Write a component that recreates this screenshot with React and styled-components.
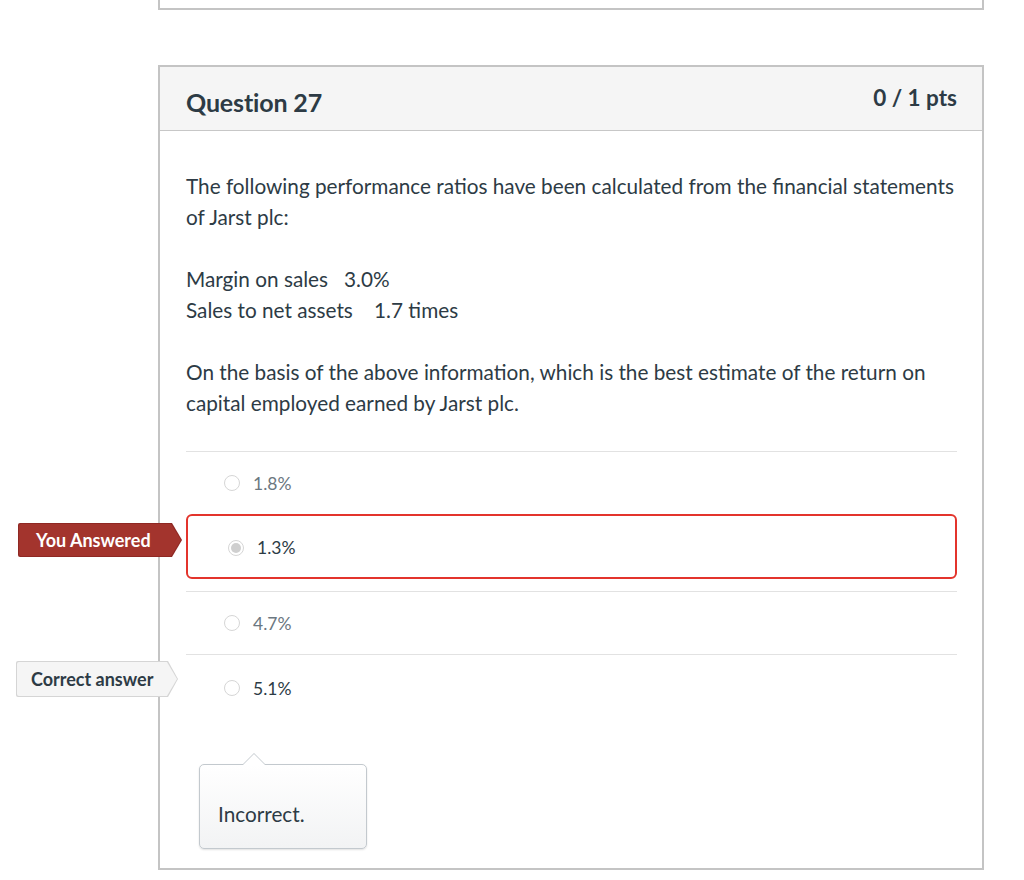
import React from "react";
import styled, { createGlobalStyle } from "styled-components";

const Global = createGlobalStyle`
  body {
    margin: 0;
    background: #fff;
    font-family: Lato, "Helvetica Neue", Arial, sans-serif;
    color: #2d3b45;
  }
`;

const Page = styled.div`
  width: 1024px;
  height: 880px;
  overflow: hidden;
  padding-left: 158px;
  box-sizing: border-box;
`;

const PrevCard = styled.div`
  width: 826px;
  height: 10px;
  box-sizing: border-box;
  border: 2px solid #c4c4c4;
  border-top: none;
`;

const Card = styled.div`
  width: 826px;
  margin-top: 55px;
  box-sizing: border-box;
  border: 2px solid #c4c4c4;
`;

const Header = styled.div`
  display: flex;
  justify-content: space-between;
  align-items: flex-start;
  height: 63px;
  padding: 0 25px 0 26px;
  background: #f5f5f5;
  border-bottom: 1px solid #c7c7c7;
`;

const Title = styled.h2`
  margin: 20px 0 0;
  font-size: 25px;
  font-weight: 700;
  color: #2d3b45;
  letter-spacing: -0.15px;
`;

const Points = styled.div`
  margin-top: 17px;
  font-size: 22.5px;
  font-weight: 700;
  color: #2d3b45;
`;

const Body = styled.div`
  padding: 40px 25px 19px 26px;
`;

const Para = styled.p`
  margin: 0 0 ${(p) => (p.$last ? 0 : 31)}px;
  font-size: 20.75px;
  line-height: 31px;
`;

const Answers = styled.div`
  margin-top: 32px;
`;

const Row = styled.div`
  position: relative;
  display: flex;
  align-items: center;
  box-sizing: border-box;
  height: ${(p) => (p.$selected ? "65px" : "63px")};
  padding-left: ${(p) => (p.$selected ? "40px" : "38px")};
  border-top: 1px solid #e2e2e2;
  ${(p) =>
    p.$selected &&
    `
    border: 2px solid #e3342c;
    border-radius: 6px;
    margin-bottom: 12px;
    padding-top: 2px;
  `}
  ${(p) => p.$correct && `padding-top: 4px;`}
`;

const Radio = styled.span`
  width: 16px;
  height: 16px;
  box-sizing: border-box;
  border-radius: 50%;
  border: 1px solid #d6d6d6;
  background: #fff;
  margin-right: 13px;
  display: flex;
  align-items: center;
  justify-content: center;
  flex-shrink: 0;
  &::after {
    content: "";
    display: ${(p) => (p.$checked ? "block" : "none")};
    width: 10px;
    height: 10px;
    border-radius: 50%;
    background: #cfcfcf;
  }
`;

const AnswerText = styled.span`
  font-size: 17.5px;
  color: ${(p) => (p.$dim ? "#6b7780" : "#2d3b45")};
`;

const Tag = styled.div`
  position: absolute;
  left: ${(p) => p.$left}px;
  top: ${(p) => p.$top}px;
  width: ${(p) => p.$w}px;
  height: ${(p) => p.$h}px;
  background: ${(p) => p.$edge};
  clip-path: polygon(0 0, calc(100% - 10px) 0, 100% 50%, calc(100% - 10px) 100%, 0 100%);
  border-radius: 2px;
`;

const TagInner = styled.div`
  position: absolute;
  inset: 1px;
  background: ${(p) => p.$bg};
  color: ${(p) => p.$fg};
  clip-path: polygon(0 0, calc(100% - 10px) 0, 100% 50%, calc(100% - 10px) 100%, 0 100%);
  border-radius: 2px;
  display: flex;
  align-items: center;
  padding-left: ${(p) => p.$pad}px;
  font-size: 18px;
  font-weight: 700;
`;

const Comment = styled.div`
  position: relative;
  margin: 47px 0 0 13px;
  width: 168px;
  height: 85px;
  box-sizing: border-box;
  padding: 34px 18px 0;
  border: 1px solid #c3c9ce;
  border-radius: 5px;
  background: linear-gradient(#ffffff, #f2f3f4);
  box-shadow: 0 1px 2px rgba(0, 0, 0, 0.12);
  font-size: 20.75px;
  line-height: 31px;
  &::before {
    content: "";
    position: absolute;
    top: -12px;
    left: 42px;
    border: 12px solid transparent;
    border-top: none;
    border-bottom-color: #c3c9ce;
  }
  &::after {
    content: "";
    position: absolute;
    top: -11px;
    left: 43px;
    border: 11px solid transparent;
    border-top: none;
    border-bottom-color: #fff;
  }
`;

const answers = [
  { value: "1.8%", dim: true },
  { value: "1.3%", selected: true },
  { value: "4.7%", dim: true },
  { value: "5.1%", correct: true },
];

export default function App() {
  return (
    <Page>
      <Global />
      <PrevCard />
      <Card>
        <Header>
          <Title>Question 27</Title>
          <Points>0 / 1 pts</Points>
        </Header>
        <Body>
          <Para>
            The following performance ratios have been calculated from the financial statements of
            Jarst plc:
          </Para>
          <Para>
            Margin on sales&nbsp;&nbsp; 3.0%
            <br />
            Sales to net assets&nbsp;&nbsp;&nbsp; 1.7 times
          </Para>
          <Para $last>
            On the basis of the above information, which is the best estimate of the return on
            capital employed earned by Jarst plc.
          </Para>
          <Answers>
            {answers.map((a) => (
              <Row key={a.value} $selected={a.selected} $correct={a.correct}>
                {a.selected && (
                  <Tag $left={-170} $top={7} $w={164} $h={34} $edge="#8f2823">
                    <TagInner $bg="#a3342d" $fg="#fff" $pad={17}>
                      You Answered
                    </TagInner>
                  </Tag>
                )}
                {a.correct && (
                  <Tag $left={-170} $top={6} $w={162} $h={36} $edge="#d5d5d5">
                    <TagInner $bg="#f5f5f5" $fg="#2d3b45" $pad={14}>
                      Correct answer
                    </TagInner>
                  </Tag>
                )}
                <Radio $checked={a.selected} />
                <AnswerText $dim={a.dim}>{a.value}</AnswerText>
              </Row>
            ))}
          </Answers>
          <Comment>Incorrect.</Comment>
        </Body>
      </Card>
    </Page>
  );
}
